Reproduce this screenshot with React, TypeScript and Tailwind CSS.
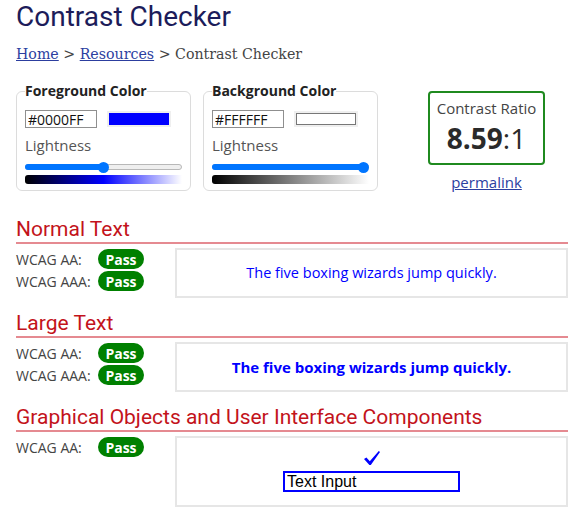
import React from 'react'

type FieldProps = {
  legend: string
  hex: string
  swatch: string
  pct: number
  gradient: string
}

function ColorField({ legend, hex, swatch, pct, gradient }: FieldProps) {
  // thumb travels inside the track like a native range input
  const thumbLeft = `calc((100% - 11px) * ${pct})`
  return (
    <fieldset className="w-[175px] rounded-[6px] border border-[#dcdcdc] px-[8px] pb-[6px]">
      <legend className="text-[14px] font-bold leading-[20px] text-[#222]">{legend}</legend>
      <div className="mt-[9px] flex items-center gap-[10px]">
        <input
          readOnly
          value={hex}
          className="h-[18px] w-[72px] border border-[#8f8f8f] px-[2px] text-[14px] leading-[16px] text-[#111] outline-none"
        />
        <div className="h-[16px] w-[64px] bg-[#efefef] p-[2px]">
          <div className={`h-full w-full border ${swatch}`} />
        </div>
      </div>
      <div className="mt-[7px] text-[15px] leading-[20px] text-[#555]">Lightness</div>
      <div className="relative mt-[6px] h-[12px]">
        <div className="absolute left-0 right-0 top-[3px] h-[6px] rounded-full border border-[#b8b8b8] bg-[#efefef]" />
        <div
          className="absolute left-0 top-[3px] h-[6px] rounded-full bg-[#0075ff]"
          style={{ width: `calc(${thumbLeft} + 6px)` }}
        />
        <div
          className="absolute top-[0.5px] h-[11px] w-[11px] rounded-full bg-[#0075ff]"
          style={{ left: thumbLeft }}
        />
      </div>
      <div className={`mt-[2px] h-[9px] rounded-l-[3px] ${gradient}`} />
    </fieldset>
  )
}

function Pass() {
  return (
    <span className="flex h-[20px] w-[46px] items-center justify-center rounded-full bg-[#008000] text-[14px] font-bold text-white">
      Pass
    </span>
  )
}

function Row({ label }: { label: string }) {
  return (
    <div className="flex h-[20px] items-center">
      <span className="w-[82px] text-[14px] text-[#444]">{label}</span>
      <Pass />
    </div>
  )
}

function Section({ title, rows, children, height }: { title: string; rows: string[]; children: React.ReactNode; height: string }) {
  return (
    <section>
      <h2 className="border-b-2 border-[#e58a91] font-['Roboto',sans-serif] text-[21px] leading-[25px] text-[#c3131b]">
        {title}
      </h2>
      <div className="mt-[4px] flex items-start">
        <div className="flex w-[159px] shrink-0 flex-col gap-[2px] pt-[1px]">
          {rows.map((r) => (
            <Row key={r} label={r} />
          ))}
        </div>
        <div className={`flex flex-1 flex-col items-center justify-center border-2 border-[#e6e6e6] ${height}`}>
          {children}
        </div>
      </div>
    </section>
  )
}

export default function App() {
  return (
    <div className="min-h-screen bg-white pl-4 pr-[9px] font-['Open_Sans',sans-serif]">
      <h1 className="font-['Roboto',sans-serif] text-[28px] leading-[33px] text-[#1c1c5a]">Contrast Checker</h1>

      <nav className="mt-[13px] font-['DejaVu_Serif',serif] text-[14.2px] leading-[17px] text-[#444]">
        <a href="#" className="text-[#2c3e9f] underline">Home</a> &gt;{' '}
        <a href="#" className="text-[#2c3e9f] underline">Resources</a> &gt; Contrast Checker
      </nav>

      <div className="mt-[18px] flex items-start">
        <div className="flex gap-[12px]">
          <ColorField
            legend="Foreground Color"
            hex="#0000FF"
            swatch="bg-[#0000ff] border-[#0000ff]"
            pct={0.5}
            gradient="bg-[linear-gradient(to_right,#000,#00f_50%,#fff)]"
          />
          <ColorField
            legend="Background Color"
            hex="#FFFFFF"
            swatch="bg-white border-[#777]"
            pct={1}
            gradient="bg-[linear-gradient(to_right,#000,#fff)]"
          />
        </div>
        <div className="ml-[50px] mt-[10px] flex flex-col items-center">
          <div className="flex h-[74px] w-[117px] flex-col items-center rounded-[4px] border-2 border-[#1f8a1f] pt-[5px]">
            <div className="text-[15px] leading-[20px] text-[#444]">Contrast Ratio</div>
            <div className="mt-[3px] text-[28px] leading-[34px] text-[#2a2a2a]">
              <span className="font-bold">8.59</span>:1
            </div>
          </div>
          <a href="#" className="mt-[7px] text-[15px] leading-[20px] text-[#2c3e9f] underline">permalink</a>
        </div>
      </div>

      <div className="mt-[25px] flex flex-col gap-[13px]">
        <Section title="Normal Text" rows={['WCAG AA:', 'WCAG AAA:']} height="h-[50px]">
          <p className="text-[14.5px] text-[#0000ff]">The five boxing wizards jump quickly.</p>
        </Section>
        <Section title="Large Text" rows={['WCAG AA:', 'WCAG AAA:']} height="h-[50px]">
          <p className="text-[15px] font-bold text-[#0000ff]">The five boxing wizards jump quickly.</p>
        </Section>
        <Section title="Graphical Objects and User Interface Components" rows={['WCAG AA:']} height="h-[71px]">
          {/* check mark drawn to match the heavy sample glyph */}
          <svg width="16" height="14" viewBox="0 0 16 14" className="text-[#0000ff]">
            <path d="M0 8 L2.4 6.6 L5.8 10.3 L14.8 0 L16 1 L6.8 14 L5.4 14 Z" fill="currentColor" />
          </svg>
          <input
            readOnly
            value="Text Input"
            className="mt-[6px] h-[21px] w-[177px] border-2 border-[#0000ff] px-[2px] font-['Liberation_Sans',Arial,sans-serif] text-[16px] text-black outline-none"
          />
        </Section>
      </div>
    </div>
  )
}
